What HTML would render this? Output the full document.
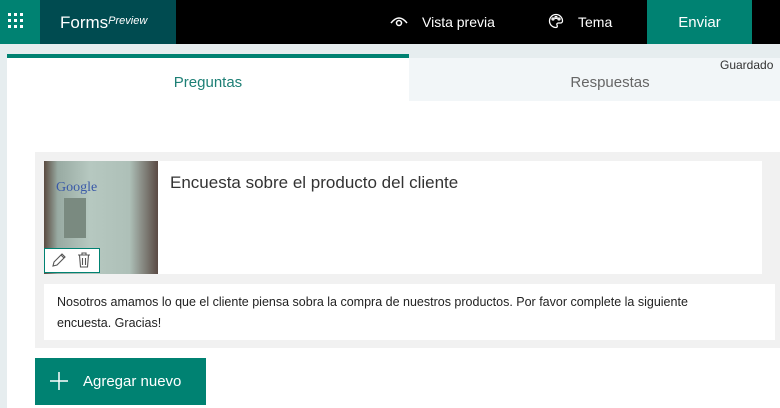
<!DOCTYPE html>
<html><head><meta charset="utf-8"><style>
*{margin:0;padding:0;box-sizing:border-box}
body{width:780px;height:408px;overflow:hidden;background:#e6edef;font-family:"Liberation Sans",sans-serif;position:relative}
.a{position:absolute}
</style></head><body>
<div class="a" style="left:0;top:0;width:780px;height:44px;background:#000"></div>
<div class="a" style="left:0;top:0;width:40px;height:44px;background:#008272"></div>
<svg class="a" style="left:8px;top:13px" width="16" height="16" viewBox="0 0 16 16" fill="#fff">
<rect x="0" y="0" width="3" height="3"/><rect x="6" y="0" width="3" height="3"/><rect x="12" y="0" width="3" height="3"/>
<rect x="0" y="6" width="3" height="3"/><rect x="6" y="6" width="3" height="3"/><rect x="12" y="6" width="3" height="3"/>
<rect x="0" y="12" width="3" height="3"/><rect x="6" y="12" width="3" height="3"/><rect x="12" y="12" width="3" height="3"/></svg>
<div class="a" style="left:40px;top:0;width:136px;height:44px;background:#004b50"></div>
<div class="a" style="left:60px;top:13px;color:#fff;font-size:17px">Forms<span style="font-size:11px;font-style:italic;vertical-align:4px">Preview</span></div>
<svg class="a" style="left:390px;top:15px" width="18" height="12" viewBox="0 0 18 12" fill="none" stroke="#fff" stroke-width="1.5"><path d="M1 8 Q9 -2 17 8"/><circle cx="9" cy="8" r="2.5"/></svg>
<div class="a" style="left:422px;top:14px;color:#fff;font-size:14px">Vista previa</div>
<svg class="a" style="left:548px;top:13px" width="16" height="16" viewBox="0 0 16 16" fill="none" stroke="#fff" stroke-width="1.3"><path d="M8 1.5a6.5 6.5 0 1 0 0 13c1.5 0 1.5-1.5 1-2.5s0-2 1.5-2h2a2 2 0 0 0 2-2A6.5 6.5 0 0 0 8 1.5z"/><circle cx="5" cy="6" r="1"/><circle cx="8" cy="4.5" r="1"/><circle cx="11" cy="6" r="1"/></svg>
<div class="a" style="left:578px;top:14px;color:#fff;font-size:14px">Tema</div>
<div class="a" style="left:647px;top:0;width:105px;height:44px;background:#008272;color:#fff;font-size:15px;text-align:center;line-height:46px">Enviar</div>
<div class="a" style="left:7px;top:54px;width:402px;height:50px;background:#fff;border-top:4px solid #008272"></div>
<div class="a" style="left:409px;top:58px;width:371px;height:44px;background:#f2f6f8"></div>
<div class="a" style="left:7px;top:74px;width:402px;text-align:center;color:#1d7f75;font-size:15px">Preguntas</div>
<div class="a" style="left:409px;top:74px;width:402px;text-align:center;color:#666;font-size:15px">Respuestas</div>
<div class="a" style="left:720px;top:58px;color:#333;font-size:12px">Guardado</div>
<div class="a" style="left:7px;top:101px;width:773px;height:307px;background:#fff"></div>
<div class="a" style="left:35px;top:152px;width:745px;height:196px;background:#f1f1f1"></div>
<div class="a" style="left:44px;top:161px;width:114px;height:113px;background:linear-gradient(90deg,#5a4a40 0%,#98aaa2 12%,#b6c8c0 40%,#aec0b8 75%,#5a4a44 100%)"></div>
<div class="a" style="left:56px;top:180px;color:#3a5aa8;font-family:'Liberation Serif',serif;font-size:14px">Google</div>
<div class="a" style="left:64px;top:198px;width:22px;height:40px;background:#7a8a80"></div>
<div class="a" style="left:44px;top:248px;width:56px;height:25px;background:#fff;border:1px solid #008272"></div>
<svg class="a" style="left:51px;top:252px" width="16" height="16" viewBox="0 0 16 16" fill="none" stroke="#555" stroke-width="1.1"><path d="M2 14l1-4L11 2l3 3-8 8z M10 3l3 3"/></svg>
<svg class="a" style="left:77px;top:252px" width="14" height="16" viewBox="0 0 14 16" fill="none" stroke="#555" stroke-width="1.1"><path d="M1 3h12M5 3V1h4v2M2.5 3l1 12h7l1-12M5.5 6v7M8.5 6v7"/></svg>
<div class="a" style="left:158px;top:161px;width:604px;height:113px;background:#fff"></div>
<div class="a" style="left:170px;top:173px;font-size:17px;color:#333">Encuesta sobre el producto del cliente</div>
<div class="a" style="left:44px;top:284px;width:731px;height:56px;background:#fff"></div>
<div class="a" style="left:57px;top:292px;width:670px;font-size:12.5px;line-height:21px;color:#222">Nosotros amamos lo que el cliente piensa sobra la compra de nuestros productos. Por favor complete la siguiente encuesta. Gracias!</div>
<div class="a" style="left:35px;top:358px;width:171px;height:47px;background:#008272"></div>
<svg class="a" style="left:49px;top:371px" width="20" height="20" viewBox="0 0 20 20" stroke="#fff" stroke-width="1.5"><path d="M10 1v18M1 10h18"/></svg>
<div class="a" style="left:83px;top:373px;color:#fff;font-size:15px">Agregar nuevo</div>
</body></html>
